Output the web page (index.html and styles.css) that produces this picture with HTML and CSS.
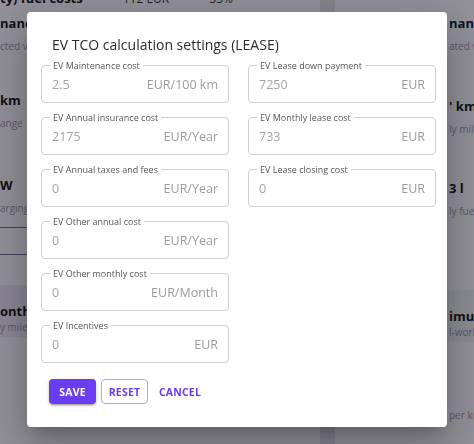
FILE: index.html
```html
<!DOCTYPE html>
<html lang="en">
<head>
<meta charset="utf-8">
<title>EV TCO calculation settings</title>
<link rel="stylesheet" href="styles.css">
</head>
<body>
<div class="page">
  <div class="card card-left">
    <div class="toprow"><b>ty) fuel costs</b><span>112 EUR</span><span>33%</span></div>
    <div class="stat s1"><b>nance costs</b><small>cted vehicle</small></div>
    <div class="stat s2"><b>km</b><small>ange</small></div>
    <div class="stat s3"><b>W</b><small>arging</small></div>
    <div class="rule r1"></div>
    <div class="rule r2"></div>
    <div class="band"><b>onthly</b><small>y mileage</small></div>
  </div>
  <div class="gutter"></div>
  <div class="card card-right">
    <div class="stat t0"><b>nance</b><small>ated values</small></div>
    <div class="stat t1"><b>' km</b><small>ly mileage</small></div>
    <div class="stat t2"><b>3 l</b><small>ly fuel</small></div>
    <div class="band green"><b>imum</b><small>l-world</small></div>
    <div class="stat t3"><small>per km</small></div>
  </div>
</div>

<div class="overlay">
  <div class="dialog">
    <h2 class="title">EV TCO calculation settings (LEASE)</h2>
    <div class="grid">
      <div class="col">
        <fieldset class="field"><legend>EV Maintenance cost</legend><div class="row"><span class="val">2.5</span><span class="unit">EUR/100 km</span></div></fieldset>
        <fieldset class="field"><legend>EV Annual insurance cost</legend><div class="row"><span class="val">2175</span><span class="unit">EUR/Year</span></div></fieldset>
        <fieldset class="field"><legend>EV Annual taxes and fees</legend><div class="row"><span class="val">0</span><span class="unit">EUR/Year</span></div></fieldset>
        <fieldset class="field"><legend>EV Other annual cost</legend><div class="row"><span class="val">0</span><span class="unit">EUR/Year</span></div></fieldset>
        <fieldset class="field"><legend>EV Other monthly cost</legend><div class="row"><span class="val">0</span><span class="unit">EUR/Month</span></div></fieldset>
        <fieldset class="field"><legend>EV Incentives</legend><div class="row"><span class="val">0</span><span class="unit">EUR</span></div></fieldset>
      </div>
      <div class="col">
        <fieldset class="field"><legend>EV Lease down payment</legend><div class="row"><span class="val">7250</span><span class="unit">EUR</span></div></fieldset>
        <fieldset class="field"><legend>EV Monthly lease cost</legend><div class="row"><span class="val">733</span><span class="unit">EUR</span></div></fieldset>
        <fieldset class="field"><legend>EV Lease closing cost</legend><div class="row"><span class="val">0</span><span class="unit">EUR</span></div></fieldset>
      </div>
    </div>
    <div class="actions">
      <button class="btn btn-save">SAVE</button>
      <button class="btn btn-reset">RESET</button>
      <button class="btn btn-cancel">CANCEL</button>
    </div>
  </div>
</div>
</body>
</html>
```

FILE: styles.css
```css
* { box-sizing: border-box; }
html, body { margin: 0; padding: 0; }
body {
  width: 474px;
  height: 444px;
  overflow: hidden;
  font-family: "Open Sans", "DejaVu Sans", sans-serif;
  background: #e9e8ee;
}

/* background page */
.page {
  display: flex;
  height: 444px;
  overflow: hidden;
}
.card {
  display: flex;
  flex-direction: column;
  background: #f8f8fa;
  overflow: hidden;
}
.card-left { width: 320px; flex-shrink: 0; }
.gutter { width: 15px; flex-shrink: 0; background: #e2e1e6; }
.card-right { flex: 1; min-width: 0; padding-left: 114px; }
.card b { font-weight: 700; font-size: 13px; color: #1d1d22; line-height: 16px; display: block; white-space: nowrap; }
.card small { font-size: 10px; color: #9a98a3; line-height: 13px; display: block; white-space: nowrap; }
.toprow { display: flex; gap: 40px; margin-top: -10px; height: 13px; flex-shrink: 0; }
.toprow span { font-size: 12px; color: #333; white-space: nowrap; }
.stat { display: flex; flex-direction: column; gap: 9px; flex-shrink: 0; }
.s1 { margin-top: 12px; }
.s2 { margin-top: 39px; }
.s3 { margin-top: 47px; }
.t0 { margin-top: 15px; }
.t1 { margin-top: 45px; }
.t2 { margin-top: 44px; }
.t3 { margin-top: 67px; }
.rule { height: 1px; background: #6f6a96; flex-shrink: 0; }
.r1 { margin-top: 12px; }
.r2 { margin-top: 26px; }
.band {
  flex-shrink: 0;
  margin-top: 30px;
  height: 52px;
  background: #ebe6f6;
  padding-top: 18px;
  display: flex;
  flex-direction: column;
  gap: 2px;
}
.card-right .band { margin-left: -114px; padding-left: 114px; margin-top: 72px; }
.band.green { background: #eef1ee; }

/* overlay + dialog */
.overlay {
  position: fixed;
  inset: 0;
  background: rgba(8, 4, 18, 0.42);
  padding: 12px 0 0 27px;
}
.dialog {
  width: 420px;
  height: 415px;
  background: #fff;
  border-radius: 4px;
  box-shadow: 0 11px 15px -7px rgba(0,0,0,0.2), 0 24px 38px 3px rgba(0,0,0,0.14), 0 9px 46px 8px rgba(0,0,0,0.12);
  padding: 22px 11px 0 14px;
}
.title {
  margin: 0 0 5px 11px;
  font-family: "Open Sans", sans-serif;
  font-size: 14px;
  font-weight: 400;
  color: #2b2b2b;
  line-height: 22px;
}
.grid {
  display: grid;
  grid-template-columns: 188px 188px;
  column-gap: 19px;
}
.col { display: flex; flex-direction: column; gap: 10px; }
.field {
  margin: 0;
  border: 1px solid #cfcfcf;
  border-radius: 4px;
  padding: 0 10px 4px 8px;
  min-width: 0;
}
.field legend {
  font-size: 9px;
  line-height: 9px;
  color: #555;
  padding: 0 3px;
  margin-left: 0;
}
.row {
  height: 28px;
  display: flex;
  align-items: center;
  justify-content: space-between;
  padding-left: 2px;
  font-size: 12.5px;
  color: #a4a4a4;
}
.unit { color: #9c9c9c; }

.actions {
  display: flex;
  align-items: center;
  gap: 5px;
  margin: 16px 0 0 8px;
}
.btn {
  font-family: "Open Sans", "DejaVu Sans", sans-serif;
  font-size: 10.5px;
  font-weight: 700;
  height: 25px;
  width: 47px;
  border-radius: 4px;
  padding: 0;
  cursor: pointer;
  letter-spacing: 0.2px;
}
.btn-save {
  background: #6a3cf2;
  color: #fff;
  border: none;
  box-shadow: 0 3px 1px -2px rgba(0,0,0,0.2), 0 2px 2px 0 rgba(0,0,0,0.14), 0 1px 5px 0 rgba(0,0,0,0.12);
}
.btn-reset {
  background: #fff;
  color: #6a3cf2;
  border: 1px solid #b5a2f3;
}
.btn-cancel {
  background: transparent;
  border: none;
  color: #6a3cf2;
  width: 50px;
  margin-left: 2px;
}
```
